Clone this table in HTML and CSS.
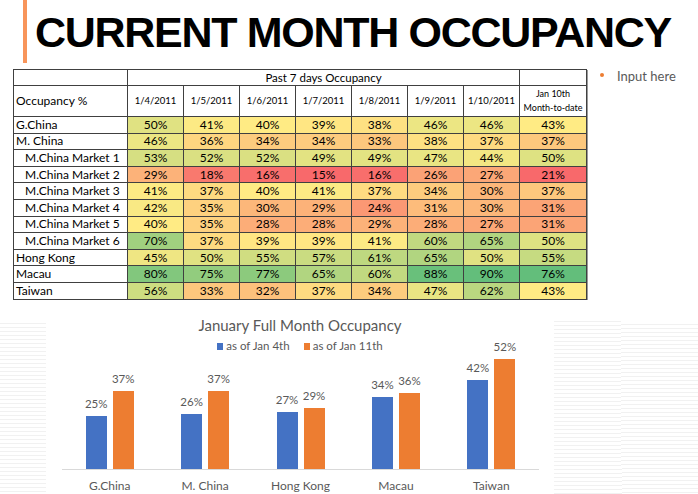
FILE: index.html
```html
<!DOCTYPE html>
<html lang="en">
<head>
<meta charset="utf-8">
<title>Current Month Occupancy</title>
<link rel="stylesheet" href="styles.css">
</head>
<body>
<div class="slide">
  <header class="head">
    <div class="accent"></div>
    <h1 class="title">CURRENT MONTH OCCUPANCY</h1>
  </header>

  <section class="main">
    <table class="occ">
      <colgroup>
        <col class="c-name">
        <col class="c-day"><col class="c-day"><col class="c-day"><col class="c-day"><col class="c-day"><col class="c-day"><col class="c-day">
        <col class="c-mtd">
      </colgroup>
      <thead>
        <tr class="r-top"><th></th><th colspan="7" class="span">Past 7 days Occupancy</th><th></th></tr>
        <tr class="r-head">
          <th class="lbl">Occupancy %</th>
          <th class="day">1/4/2011</th><th class="day">1/5/2011</th><th class="day">1/6/2011</th><th class="day">1/7/2011</th><th class="day">1/8/2011</th><th class="day">1/9/2011</th><th class="day">1/10/2011</th>
          <th class="mtd">Jan 10th<br>Month-to-date</th>
        </tr>
      </thead>
      <tbody>
        <tr><td class="name">G.China</td><td style="background:#e0e282">50%</td><td style="background:#fcea84">41%</td><td style="background:#ffeb84">40%</td><td style="background:#ffe683">39%</td><td style="background:#fee182">38%</td><td style="background:#ece683">46%</td><td style="background:#ece683">46%</td><td style="background:#ffeb84">43%</td></tr>
        <tr><td class="name">M. China</td><td style="background:#ece683">46%</td><td style="background:#fed680">36%</td><td style="background:#fdcc7e">34%</td><td style="background:#fdcc7e">34%</td><td style="background:#fdc77d">33%</td><td style="background:#fee182">38%</td><td style="background:#fedb81">37%</td><td style="background:#fdc87d">37%</td></tr>
        <tr class="sub"><td class="name">M.China Market 1</td><td style="background:#d6df82">53%</td><td style="background:#dae082">52%</td><td style="background:#dae082">52%</td><td style="background:#e3e382">49%</td><td style="background:#e3e382">49%</td><td style="background:#e9e583">47%</td><td style="background:#f3e783">44%</td><td style="background:#dee282">50%</td></tr>
        <tr class="sub"><td class="name">M.China Market 2</td><td style="background:#fcb279">29%</td><td style="background:#f9796e">18%</td><td style="background:#f86e6c">16%</td><td style="background:#f8696b">15%</td><td style="background:#f86e6c">16%</td><td style="background:#fba276">26%</td><td style="background:#fba777">27%</td><td style="background:#f8696b">21%</td></tr>
        <tr class="sub"><td class="name">M.China Market 3</td><td style="background:#fcea84">41%</td><td style="background:#fedb81">37%</td><td style="background:#ffeb84">40%</td><td style="background:#fcea84">41%</td><td style="background:#fedb81">37%</td><td style="background:#fdcc7e">34%</td><td style="background:#fcb77a">30%</td><td style="background:#fdc87d">37%</td></tr>
        <tr class="sub"><td class="name">M.China Market 4</td><td style="background:#f9e984">42%</td><td style="background:#fed17f">35%</td><td style="background:#fcb77a">30%</td><td style="background:#fcb279">29%</td><td style="background:#fb9874">24%</td><td style="background:#fdbc7b">31%</td><td style="background:#fcb77a">30%</td><td style="background:#fba476">31%</td></tr>
        <tr class="sub"><td class="name">M.China Market 5</td><td style="background:#ffeb84">40%</td><td style="background:#fed17f">35%</td><td style="background:#fcad78">28%</td><td style="background:#fcad78">28%</td><td style="background:#fcb279">29%</td><td style="background:#fcad78">28%</td><td style="background:#fba777">27%</td><td style="background:#fba476">31%</td></tr>
        <tr class="sub"><td class="name">M.China Market 6</td><td style="background:#a1d07f">70%</td><td style="background:#fedb81">37%</td><td style="background:#ffe683">39%</td><td style="background:#ffe683">39%</td><td style="background:#fcea84">41%</td><td style="background:#c1d980">60%</td><td style="background:#b1d580">65%</td><td style="background:#dee282">50%</td></tr>
        <tr><td class="name">Hong Kong</td><td style="background:#efe683">45%</td><td style="background:#e0e282">50%</td><td style="background:#d0dd81">55%</td><td style="background:#cadc81">57%</td><td style="background:#bed880">61%</td><td style="background:#b1d580">65%</td><td style="background:#e0e282">50%</td><td style="background:#c6db81">55%</td></tr>
        <tr><td class="name">Macau</td><td style="background:#82c77d">80%</td><td style="background:#92cc7e">75%</td><td style="background:#8cca7d">77%</td><td style="background:#b1d580">65%</td><td style="background:#c1d980">60%</td><td style="background:#69c07b">88%</td><td style="background:#63be7b">90%</td><td style="background:#63be7b">76%</td></tr>
        <tr><td class="name">Taiwan</td><td style="background:#cddd81">56%</td><td style="background:#fdc77d">33%</td><td style="background:#fdc17c">32%</td><td style="background:#fedb81">37%</td><td style="background:#fdcc7e">34%</td><td style="background:#e9e583">47%</td><td style="background:#bad780">62%</td><td style="background:#ffeb84">43%</td></tr>
      </tbody>
    </table>
    <ul class="notes"><li>Input here</li></ul>
  </section>

  <section class="band">
    <figure class="chart">
      <figcaption class="chart-title">January Full Month Occupancy</figcaption>
      <div class="legend">
        <span class="key"><i class="sw blue"></i>as of Jan 4th</span>
        <span class="key"><i class="sw orange"></i>as of Jan 11th</span>
      </div>
      <div class="plot">
        <div class="group">
          <div class="bar-col"><span class="val">25%</span><div class="bar blue" style="height:53px"></div></div>
          <div class="bar-col"><span class="val">37%</span><div class="bar orange" style="height:78px"></div></div>
        </div>
        <div class="group">
          <div class="bar-col"><span class="val">26%</span><div class="bar blue" style="height:55px"></div></div>
          <div class="bar-col"><span class="val">37%</span><div class="bar orange" style="height:78px"></div></div>
        </div>
        <div class="group">
          <div class="bar-col"><span class="val">27%</span><div class="bar blue" style="height:57px"></div></div>
          <div class="bar-col"><span class="val">29%</span><div class="bar orange" style="height:61px"></div></div>
        </div>
        <div class="group">
          <div class="bar-col"><span class="val">34%</span><div class="bar blue" style="height:72px"></div></div>
          <div class="bar-col"><span class="val">36%</span><div class="bar orange" style="height:76px"></div></div>
        </div>
        <div class="group">
          <div class="bar-col"><span class="val">42%</span><div class="bar blue" style="height:89px"></div></div>
          <div class="bar-col"><span class="val">52%</span><div class="bar orange" style="height:110px"></div></div>
        </div>
      </div>
      <div class="cats">
        <span>G.China</span><span>M. China</span><span>Hong Kong</span><span>Macau</span><span>Taiwan</span>
      </div>
    </figure>
  </section>
</div>
</body>
</html>
```

FILE: styles.css
```css
* {
  box-sizing: border-box;
  margin: 0;
  padding: 0;
}

html, body {
  width: 698px;
  height: 494px;
  overflow: hidden;
  background: #fff;
}

body {
  font-family: Lato, "Liberation Sans", sans-serif;
  color: #000;
}

.slide {
  width: 698px;
  height: 494px;
  display: flex;
  flex-direction: column;
}

/* ---------- header ---------- */
.head {
  display: flex;
  align-items: flex-start;
  gap: 8px;
  height: 69px;
  padding-left: 23px;
  flex: none;
}

.accent {
  width: 4px;
  height: 63px;
  background: #f8955b;
}

.title {
  font-family: "Liberation Sans", Arial, sans-serif;
  font-weight: 700;
  font-size: 43px;
  line-height: 50px;
  letter-spacing: -1.3px;
  padding-top: 7px;
  color: #000;
  white-space: nowrap;
}

/* ---------- table ---------- */
.main {
  display: flex;
  align-items: flex-start;
  padding-left: 13px;
  height: 231px;
  flex: none;
}

.occ {
  border-collapse: collapse;
  table-layout: fixed;
  width: 573px;
  font-size: 12px;
  line-height: 14px;
  box-shadow: 1px 1px 0 #9a9a9a;
}

.c-name { width: 114px; }
.c-day { width: 56px; }
.c-mtd { width: 67px; }

.occ th,
.occ td {
  border: 1px solid #404040;
  padding: 0;
  font-weight: 400;
  text-align: center;
  white-space: nowrap;
  overflow: hidden;
}

.r-top { height: 16px; }
.r-head { height: 31px; }
.occ tbody tr { height: 16.6px; }

.occ .span { font-size: 11.5px; }
.occ .day { font-size: 9.5px; }
.occ .mtd { font-size: 9px; line-height: 14px; }

.occ .lbl,
.occ .name {
  text-align: left;
  padding-left: 2px;
}

.occ .lbl { font-size: 12px; }

.occ .sub .name { padding-left: 11px; }

.notes {
  list-style: none;
  margin-left: 13px;
  font-size: 13px;
  line-height: 14px;
  color: #595959;
}

.notes li {
  display: flex;
  align-items: center;
  gap: 13px;
}

.notes li::before {
  content: "";
  width: 4px;
  height: 4px;
  border-radius: 50%;
  background: #ed7d31;
  margin-top: -3px;
}

/* ---------- chart ---------- */
.band {
  flex: 1;
  background:
    linear-gradient(#fff, #fff) 0 0 / 100% 21px no-repeat,
    repeating-linear-gradient(179.4deg, #fff 0 3px, #f1f1f1 3px 4px);
}

.chart {
  width: 508px;
  height: 100%;
  margin-left: 46px;
  background: #fff;
  display: flex;
  flex-direction: column;
  align-items: center;
  padding-top: 16px;
  color: #595959;
}

.chart-title {
  font-size: 15px;
  line-height: 18px;
}

.legend {
  display: flex;
  gap: 14px;
  margin-top: 5px;
  font-size: 11.5px;
  line-height: 14px;
}

.key {
  display: flex;
  align-items: center;
  gap: 3px;
}

.sw {
  width: 6px;
  height: 7px;
}

.blue { background: #4472c4; }
.orange { background: #ed7d31; }

.plot {
  align-self: stretch;
  display: flex;
  height: 117px;
  margin: 0 15px 0 16px;
  border-bottom: 1px solid #d9d9d9;
}

.group {
  flex: 1;
  display: flex;
  justify-content: center;
  align-items: flex-end;
  gap: 6px;
}

.bar-col {
  width: 21px;
  display: flex;
  flex-direction: column;
  align-items: center;
}

.val {
  font-size: 11.5px;
  line-height: 14px;
  margin-bottom: 5px;
  white-space: nowrap;
}

.bar { width: 21px; }

.cats {
  align-self: stretch;
  display: flex;
  margin: 9px 15px 0 16px;
  font-size: 12px;
  line-height: 14px;
}

.cats span {
  flex: 1;
  text-align: center;
}
```
